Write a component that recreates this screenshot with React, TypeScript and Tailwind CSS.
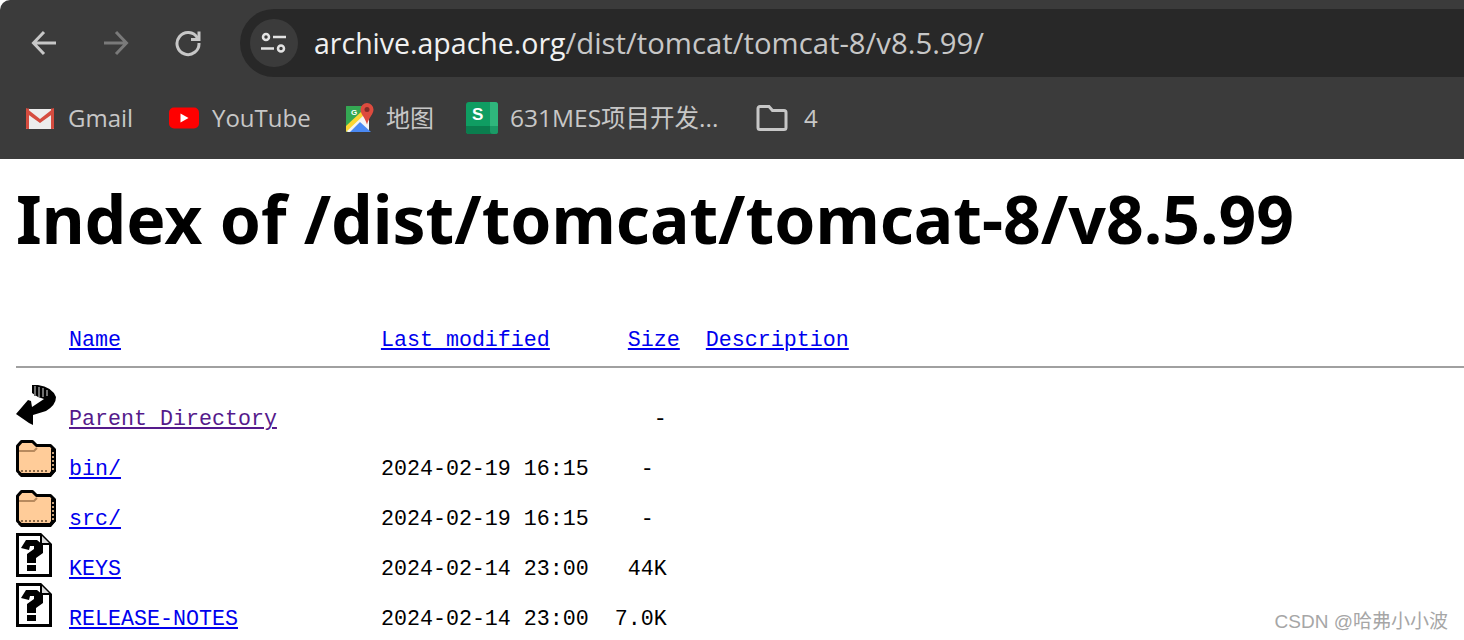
import React from "react";

const mono = "font-['Liberation_Mono','Noto_Sans_CJK_SC',monospace] text-[21.67px] leading-[26px] whitespace-pre";
const link = "text-[#0000ee] underline";

function BackIcon({ color }: { color: string }) {
  return (
    <svg width="28" height="28" viewBox="0 0 28 28" fill="none" stroke={color} strokeWidth="3">
      <path d="M26 14H4M14 3L3.5 14L14 25" />
    </svg>
  );
}

function Gmail() {
  return (
    <svg width="30" height="24" viewBox="0 0 30 24">
      <path d="M1 3h28v19a1 1 0 0 1-1 1H2a1 1 0 0 1-1-1z" fill="#ececec" />
      <path d="M1 2l14 11L29 2v5L15 17 1 7z" fill="#d54c3f" />
      <path d="M1 2.5h3V23H2a1 1 0 0 1-1-1zM26 2.5h3V22a1 1 0 0 1-1 1h-2z" fill="#d54c3f" />
    </svg>
  );
}

function YouTube() {
  return (
    <svg width="30" height="22" viewBox="0 0 30 22">
      <rect width="30" height="21" y="0.5" rx="5" fill="#ff0000" />
      <path d="M11.5 6.5v9l8-4.5z" fill="#fff" />
    </svg>
  );
}

function Maps() {
  return (
    <svg width="29" height="30" viewBox="0 0 29 30">
      <path d="M1 4a1 1 0 0 1 1-1h22v26H2a1 1 0 0 1-1-1z" fill="#34a853" />
      <path d="M1 28L24 6v23H3z" fill="#f4f4f4" />
      <path d="M1 23L17 8l3 3L1 29z" fill="#fbd634" />
      <path d="M5 29l10-10 11 10z" fill="#4a89f3" />
      <path d="M1 4a1 1 0 0 1 1-1h12L1 16z" fill="#34a853" />
      <path d="M22 0a6.500 6.500 0 0 1 6.500 6.500c0 4.500-4.500 8-6.500 15-2-7-6.500-10.500-6.500-15A6.500 6.500 0 0 1 22 0z" fill="#dd4b3e" />
      <circle cx="22" cy="6.500" r="2.500" fill="#802d27" />
      <text x="6" y="12" fontSize="8" fontWeight="700" fill="#fff" fontFamily="'Liberation Sans',sans-serif">G</text>
    </svg>
  );
}

function Sheet() {
  return (
    <svg width="32" height="32" viewBox="0 0 32 32">
      <rect width="32" height="32" rx="3" fill="#0f9d62" />
      <path d="M24 0h5a3 3 0 0 1 3 3v26a3 3 0 0 1-3 3h-5z" fill="#2fb67c" />
      <path d="M0 24h32v5a3 3 0 0 1-3 3H3a3 3 0 0 1-3-3z" fill="#0a7d4e" />
      <path d="M24 24h8v5a3 3 0 0 1-3 3h-2a3 3 0 0 1-3-3z" fill="#1b9a66" />
      <text x="6" y="18" fontSize="17" fontWeight="700" fill="#fff" fontFamily="'Liberation Sans',sans-serif">S</text>
    </svg>
  );
}

function ParentIcon() {
  return (
    <svg width="40" height="42" viewBox="0 0 40 42">
      <path d="M16 0h6q14 2 18 12q0 8-10 14l-13 4v10l-4-2L0 29l12-14 3 1 1 6 12-8-6-2-6-4z" fill="#000" />
      <path d="M18 1h2v10h-2zM22 2h2v10h-2zM26 3h2v9h-2zM30 5h2v6h-2z" fill="#6e6e6e" />
    </svg>
  );
}

function FolderIcon() {
  return (
    <svg width="40" height="37" viewBox="0 0 40 37">
      <path d="M1.500 31V6l4-4.500h11l4 4h14l4 4v21l-4 4H5z" fill="#ffcc99" stroke="#000" strokeWidth="3" strokeLinejoin="round" />
      <path d="M3 11h15l3-3" fill="none" stroke="#b88a5e" strokeWidth="2" />
      <path d="M35 8l5 3v20l-5 6H5l-3-3h31l2-3z" fill="#000" />
      <path d="M37 12v18" stroke="#c9a27a" strokeWidth="2" strokeDasharray="2 2" />
      <path d="M5 31h28" stroke="#8a6a48" strokeWidth="2" strokeDasharray="2 2" />
    </svg>
  );
}

function UnknownIcon() {
  return (
    <svg width="36" height="44" viewBox="0 0 36 44">
      <path d="M1.500 1.500h23l10 10v31h-33z" fill="#fff" stroke="#000" strokeWidth="3" />
      <path d="M25 2v9h9" fill="#d8d8d8" stroke="#000" strokeWidth="2" />
      <path d="M33 12h3v32H2v-3h31z" fill="#000" />
      <path d="M5 15l5-8h11l6 5v8l-7 5v5h-9v-9l7-5v-3h-4l-1 4z" fill="#000" />
      <rect x="11" y="32" width="9" height="6" fill="#000" />
    </svg>
  );
}

const rows = [
  { icon: <ParentIcon />, name: "Parent Directory", visited: true, rest: "                             -" },
  { icon: <FolderIcon />, name: "bin/", rest: "                    2024-02-19 16:15    -" },
  { icon: <FolderIcon />, name: "src/", rest: "                    2024-02-19 16:15    -" },
  { icon: <UnknownIcon />, name: "KEYS", rest: "                    2024-02-14 23:00   44K" },
  { icon: <UnknownIcon />, name: "RELEASE-NOTES", rest: "           2024-02-14 23:00  7.0K" },
];

export default function App() {
  return (
    <div className="h-[640px] w-[1464px] overflow-hidden bg-white relative">
      <header className="h-[159px] bg-[#3b3b3b] rounded-tl-[10px] pt-[9px]">
        <div className="flex items-center h-[68px]">
          <div className="flex items-center w-[240px] pl-[30px] gap-[44px]">
            <BackIcon color="#c7c7c7" />
            <div className="rotate-180"><BackIcon color="#7a7a7a" /></div>
            <svg width="28" height="28" viewBox="0 0 28 28" fill="none" stroke="#c7c7c7" strokeWidth="3">
              <path d="M23.500 9A11 11 0 1 0 25 14" />
              <path d="M25 2.500V10.500H17" />
            </svg>
          </div>
          <div className="flex-1 h-[68px] bg-[#282828] rounded-l-[34px] flex items-center pl-[10px]">
            <div className="w-[48px] h-[48px] rounded-full bg-[#3b3b3b] flex items-center justify-center">
              <svg width="28" height="22" viewBox="0 0 28 22" fill="none" stroke="#e3e3e3" strokeWidth="2.500">
                <circle cx="6" cy="5" r="3" />
                <path d="M13 5h13M1 16.500h13" />
                <circle cx="21" cy="16.500" r="3" />
              </svg>
            </div>
            <div className="ml-[16px] text-[29.3px] leading-[40px] font-['Open_Sans','Noto_Sans',sans-serif] text-[#c7c7c7]">
              <span className="text-[#f1f1f1] text-[28.5px]">archive.apache.org</span>/dist/tomcat/tomcat-8/v8.5.99/
            </div>
          </div>
        </div>
        <nav className="flex items-center h-[64px] mt-[9px] pl-[25px] text-[24px] text-[#c7c7c7] font-['Open_Sans','Noto_Sans_CJK_SC',sans-serif]">
          <Gmail />
          <span className="ml-[13px] w-[66px]">Gmail</span>
          <div className="ml-[35px]"><YouTube /></div>
          <span className="ml-[13px] w-[98px] whitespace-nowrap">YouTube</span>
          <div className="ml-[35px]"><Maps /></div>
          <span className="ml-[12px] w-[48px] whitespace-nowrap">地图</span>
          <div className="ml-[32px]"><Sheet /></div>
          <span className="ml-[12px] w-[208px] whitespace-nowrap text-[24.5px]">631MES项目开发...</span>
          <svg className="ml-[38px]" width="32" height="26" viewBox="0 0 32 26" fill="none" stroke="#c7c7c7" strokeWidth="3">
            <path d="M2 3.500a2 2 0 0 1 2-2h9l3.500 4H28a2 2 0 0 1 2 2V22.500a2 2 0 0 1-2 2H4a2 2 0 0 1-2-2z" />
          </svg>
          <span className="ml-[16px]">4</span>
        </nav>
      </header>

      <main className="pl-[16px]">
        <h1 className="mt-[16px] text-[66px] leading-[86px] font-bold text-black font-['Noto_Sans','Open_Sans',sans-serif]">
          Index of /dist/tomcat/tomcat-8/v8.5.99
        </h1>
        <div className={`${mono} mt-[67px] pl-[53px] text-black`}>
          <a className={link}>Name</a>{"                    "}<a className={link}>Last modified</a>{"      "}<a className={link}>Size</a>{"  "}<a className={link}>Description</a>
        </div>
        <hr className="mt-[12px] border-0 border-t-2 border-[#a0a0a0]" />
        <div className={`${mono} text-black mt-[15px]`}>
          {rows.map((r) => (
            <div key={r.name} className="flex items-end h-[50px]">
              <div className="w-[53px] flex items-end shrink-0 mb-[6px]">{r.icon}</div>
              <a className={r.visited ? "text-[#551a8b] underline" : link}>{r.name}</a>
              <span>{r.rest}</span>
            </div>
          ))}
        </div>
      </main>

      <div className="absolute right-[16px] bottom-[5px] text-[19px] leading-[26px] text-[#a6a6a6] font-['Liberation_Sans','Noto_Sans_CJK_SC',sans-serif]">
        CSDN @哈弗小小波
      </div>
    </div>
  );
}
